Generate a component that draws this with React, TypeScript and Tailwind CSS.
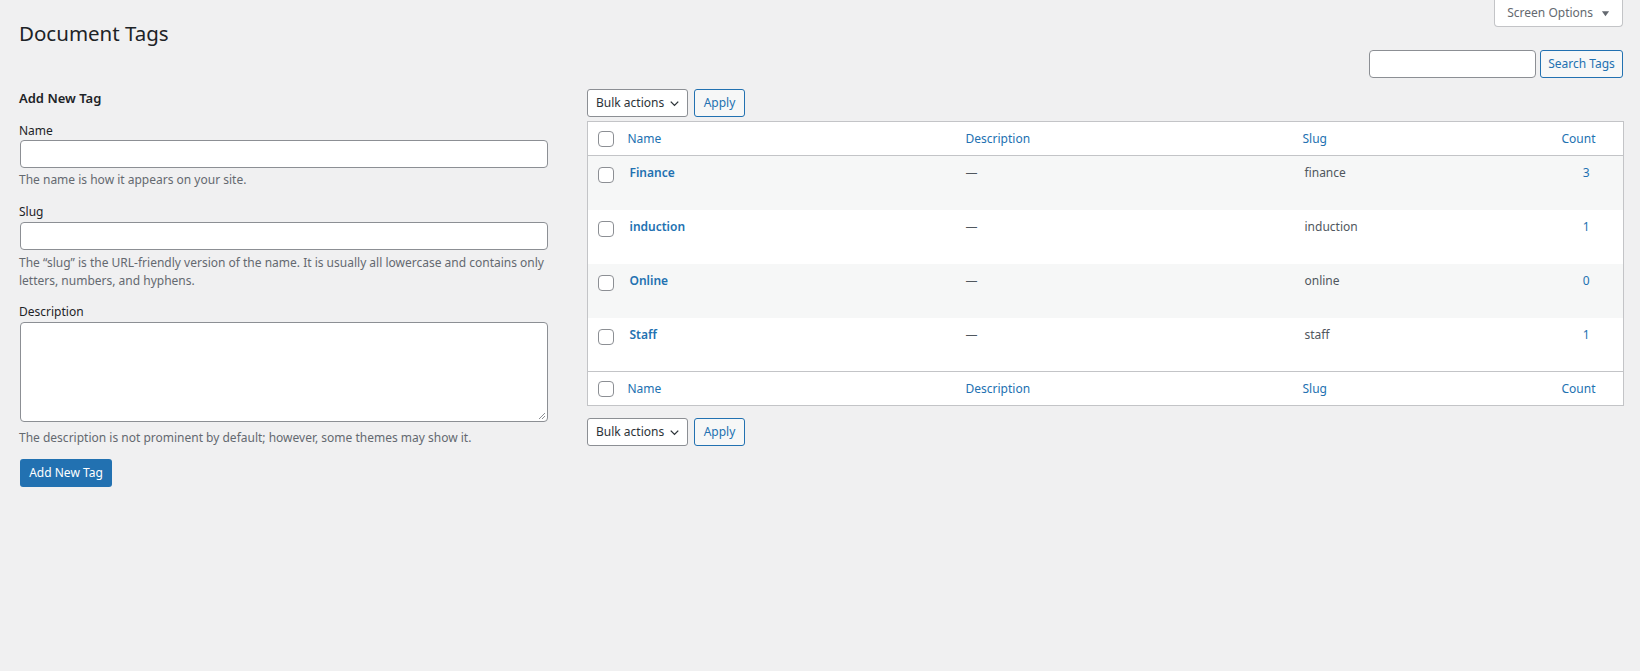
import React from 'react';

const tags = [
  { name: 'Finance', slug: 'finance', count: 3 },
  { name: 'induction', slug: 'induction', count: 1 },
  { name: 'Online', slug: 'online', count: 0 },
  { name: 'Staff', slug: 'staff', count: 1 },
];

const FONT = '"Noto Sans", "Open Sans", sans-serif';

const Checkbox: React.FC = () => (
  <span className="block h-4 w-4 rounded-[4px] border border-[#8c8f94] bg-white" />
);

const BulkBar: React.FC = () => (
  <div className="flex items-center gap-[6px]">
    <div className="flex h-[28px] w-[101px] items-center justify-between whitespace-nowrap rounded-[3px] border border-[#8c8f94] bg-white pl-[8px] pr-[5px] text-[12px] text-[#2c3338]">
      <span>Bulk actions</span>
      <svg width="15" height="15" viewBox="0 0 20 20" fill="none" stroke="#2c3338" strokeWidth="1.8">
        <path d="M5 7.5l5 5 5-5" />
      </svg>
    </div>
    <button className="h-[28px] w-[51px] rounded-[3px] border border-[#2271b1] bg-[#f6f7f7] text-[12px] text-[#2271b1]">
      Apply
    </button>
  </div>
);

const HeaderRow: React.FC<{ top?: boolean }> = ({ top }) => (
  <tr className={top ? 'border-b border-[#c3c4c7]' : 'border-t border-[#c3c4c7]'}>
    <td className="h-[34px] pl-[10px] align-middle">
      <Checkbox />
    </td>
    <td className="pl-[10px] align-middle text-[#2271b1]">Name</td>
    <td className="pl-[10px] align-middle text-[#2271b1]">Description</td>
    <td className="pl-[10px] align-middle text-[#2271b1]">Slug</td>
    <td className="pl-[12px] align-middle text-[#2271b1]">Count</td>
  </tr>
);

const Field: React.FC<{ label: string; className?: string; children: React.ReactNode }> = ({ label, className, children }) => (
  <div className={className ?? 'mb-[14px]'}>
    <div className="leading-[18px] text-[#1d2327]">{label}</div>
    {children}
  </div>
);

export default function App() {
  return (
    <div
      className="min-h-[671px] bg-[#f0f0f1] pl-[19px] pr-[17px] text-[12px] leading-[18px] text-[#3c434a]"
      style={{ fontFamily: FONT }}
    >
      <div className="flex items-start justify-between">
        <h1 className="mt-[18px] text-[20.5px] font-normal leading-[30px] text-[#1d2327]">Document Tags</h1>
        <div className="flex h-[27px] items-center gap-[8px] rounded-b-[4px] border border-t-0 border-[#c3c4c7] bg-white px-[12px] text-[#646970]">
          <span>Screen Options</span>
          <svg width="9" height="9" viewBox="0 0 10 10">
            <path d="M1 2.5h8L5 8z" fill="#646970" />
          </svg>
        </div>
      </div>

      <div className="mt-[2px] flex justify-end gap-[4px]">
        <div className="h-[28px] w-[167px] rounded-[4px] border border-[#8c8f94] bg-white" />
        <button className="h-[28px] w-[83px] rounded-[3px] border border-[#2271b1] bg-[#f6f7f7] text-[#2271b1]">
          Search Tags
        </button>
      </div>

      <div className="mt-[11px] flex">
        <div className="w-[568px] shrink-0">
          <h2 className="text-[13px] font-semibold leading-[18px] text-[#1d2327]">Add New Tag</h2>
          <div className="mt-[15px] w-[529px]">
            <Field label="Name">
              <div className="ml-px h-[28px] rounded-[4px] border border-[#8c8f94] bg-white" />
              <p className="mt-[3px] text-[#646970]">The name is how it appears on your site.</p>
            </Field>
            <Field label="Slug" className="mb-[13px]">
              <div className="ml-px mt-[1px] h-[28px] rounded-[4px] border border-[#8c8f94] bg-white" />
              <p className="mt-[4px] text-[#646970]">
                The “slug” is the URL-friendly version of the name. It is usually all lowercase and contains only
                letters, numbers, and hyphens.
              </p>
            </Field>
            <Field label="Description">
              <div className="relative ml-px mt-[1px] h-[100px] rounded-[4px] border border-[#8c8f94] bg-white">
                <svg className="absolute bottom-[1px] right-[1px]" width="8" height="8" viewBox="0 0 8 8" stroke="#8c8f94">
                  <path d="M1 7L7 1M4 7L7 4" />
                </svg>
              </div>
              <p className="mt-[7px] text-[#646970]">
                The description is not prominent by default; however, some themes may show it.
              </p>
            </Field>
            <button className="ml-px mt-[-2px] h-[28px] w-[92px] rounded-[3px] bg-[#2271b1] text-white">
              Add New Tag
            </button>
          </div>
        </div>

        <div className="flex-1">
          <BulkBar />
          <table className="mt-[4px] w-full table-fixed border-collapse border border-[#c3c4c7] bg-white text-left">
            <colgroup>
              <col className="w-[30px]" />
              <col className="w-[338px]" />
              <col className="w-[337px]" />
              <col className="w-[257px]" />
              <col className="w-[74px]" />
            </colgroup>
            <thead>
              <HeaderRow top />
            </thead>
            <tbody>
              {tags.map((t, i) => (
                <tr key={t.slug} className={i % 2 === 0 ? 'bg-[#f6f7f7]' : 'bg-white'}>
                  <td className="h-[54px] pl-[10px] pt-[11px] align-top">
                    <Checkbox />
                  </td>
                  <td className="pl-[12px] pt-[8px] align-top font-semibold text-[#2271b1]">{t.name}</td>
                  <td className="pl-[10px] pt-[8px] align-top text-[#50575e]">—</td>
                  <td className="pl-[12px] pt-[8px] align-top text-[#50575e]">{t.slug}</td>
                  <td className="pt-[8px] text-center align-top text-[#2271b1]">{t.count}</td>
                </tr>
              ))}
            </tbody>
            <tfoot>
              <HeaderRow />
            </tfoot>
          </table>
          <div className="mt-[12px]">
            <BulkBar />
          </div>
        </div>
      </div>
    </div>
  );
}
